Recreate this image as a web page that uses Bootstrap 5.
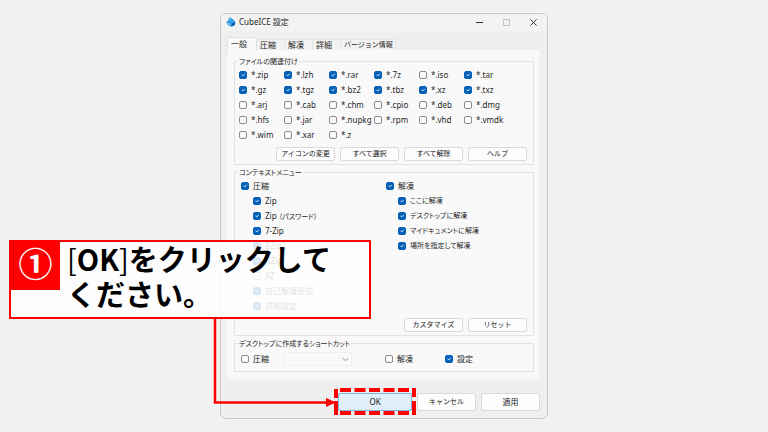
<!DOCTYPE html>
<html lang="ja">
<head>
<meta charset="utf-8">
<meta name="viewport" content="width=device-width, initial-scale=1">
<title>CubeICE 設定</title>
<link href="https://cdn.jsdelivr.net/npm/bootstrap@5.3.0/dist/css/bootstrap.min.css" rel="stylesheet">
<style>
  body { background: #f1f1f1; color: #262626; font-family: "Noto Sans", "Noto Sans CJK JP", sans-serif; font-size: 8px; line-height: 12px; font-feature-settings: "palt"; overflow: hidden; }
  .dialog-wrap { width: 100%; max-width: 328px; margin-bottom: 1px; }
  .dialog { background: #efefef; border: 1px solid #c9c9c9; border-radius: 6px; }
  .title-bar { background: #f3f3f3; border-radius: 5px 5px 0 0; height: 17px; padding: 0 6px 0 5px; gap: 3px; }
  .title-bar h1 { font-size: 8px; line-height: 16px; font-weight: 400; }
  .win-btn { width: 15px; height: 16px; }
  .win-btns { gap: 12px; }
  .sheet { padding: 6px 7px 0 6px; }
  .sheet .nav-tabs { border: 0; }
  .sheet .nav-link { padding: 0 8px 0 3px; height: 11px; line-height: 10px; font-size: 8px; color: #262626; background: #f2f2f2; border: 1px solid #e4e4e4; border-bottom: 0; border-left: 0; border-radius: 0; margin: 0; }
  .sheet .nav-link.active { height: 13px; padding: 0 9px 0 3px; border-left: 1px solid #e4e4e4; background: #f9f9f9; color: #262626; }
  .sheet .nav-link.kana { padding: 0 2px 0 3px; }
  .panel { background: #f9f9f9; border: 1px solid #f4f4f4; border-top: 0; padding: 6px 5px 7px 6px; }
  .group { border: 1px solid #e3e3e3; padding: 0 6px 3px 4px; }
  .group + .group { margin-top: 2px; }
  .group legend { float: none; width: auto; margin: 0 0 0 -1px; padding: 0 1px; font-size: 7px; line-height: 12px; }
  .kana, .sheet .kana { font-size: 7px; }
  .types { display: grid; grid-template-columns: repeat(6, 1fr); margin-right: 18px; }
  .opt { display: flex; align-items: center; gap: 4px; height: 15px; white-space: nowrap; }
  .opt .form-check-input { flex: none; width: 8px; height: 8px; margin: 0; border: 1px solid #8c8c8c; border-radius: 2px; background-color: #fbfbfb; }
  .opt .form-check-input:checked { background-color: #0560b8; border-color: #0560b8; }
  .indent { padding-left: 12px; }
  .menus { padding-left: 2px; }
  .col-pack { width: 145px; }
  .actions { gap: 5px; margin-top: 4px; }
  .push { width: 59px; height: 14px; padding: 0; font-size: 7px; line-height: 12px; color: #202020; background: #fdfdfd; border: 1px solid #dadada; border-radius: 2px; white-space: nowrap; }
  .shortcuts { padding: 2px 0 1px 2px; }
  .shortcuts .form-select { width: 69px; height: 14px; min-height: 0; padding: 0; font-size: 8px; border: 1px solid #ebebeb; border-radius: 0; background-color: #f9f9f9; background-size: 7px 7px; background-position: right 2px center; opacity: .6; }
  .short-pack { width: 42px; }
  .short-combo { width: 102px; }
  .short-open { width: 60px; }
  .footer-bar { gap: 5px; padding: 13px 7px 7px 0; }
  .footer-bar .push { height: 18px; line-height: 16px; }
  .footer-bar .push-wide { font-size: 8px; }
  .ok-wrap { position: relative; }
  .footer-bar .push-ok { width: 74px; display: block; background: #e0eef9; border-color: #7db5df; }
  .focus-dash { position: absolute; left: -4px; top: -5px; }
  .callout { position: absolute; left: -211px; top: 227px; width: 362px; min-height: 79px; background: rgba(255,255,255,.85); border: 2px solid #f00; color: #000; }
  .step { width: 49px; height: 48px; background: #f00; color: #fff; font: 700 34px/42px "Noto Sans CJK JP", sans-serif; text-align: center; font-feature-settings: normal; }
  .message { font: 700 29px/35px "Noto Sans CJK JP", sans-serif; padding: 0 0 0 7px; font-feature-settings: normal; white-space: nowrap; margin-top: -1px; }
  .thin { font-weight: 400; }
  .arrow { position: absolute; left: -8px; top: 305px; }
</style>
<script src="https://cdn.jsdelivr.net/npm/bootstrap@5.3.0/dist/js/bootstrap.bundle.min.js"></script>
</head>
<body>
<main class="d-flex justify-content-center align-items-center min-vh-100">
  <div class="dialog-wrap position-relative">
    <div class="dialog">
      <header class="title-bar d-flex align-items-center">
        <svg width="10" height="10" viewBox="0 0 20 20" aria-hidden="true"><path d="M6 1l6 2 3 3 4 4-1 6-6 3-5-1-5-4-1-4 4-3z" fill="#1f8fe0"/><path d="M6 1l6 2-2 5-5-2z" fill="#48b7f2"/><path d="M8 7l6 0 4 3-6 3-4-2z" fill="#3da4ea"/><path d="M12 13l6-3-1 6-6 3z" fill="#0a4fae"/><path d="M1 13l5-2 4 4-2 2z" fill="#8ac9ef"/></svg>
        <h1 class="mb-0 flex-grow-1">CubeICE 設定</h1>
        <div class="d-flex win-btns">
          <button class="btn p-0 border-0 win-btn d-flex align-items-center justify-content-center" type="button" aria-label="最小化"><svg width="7" height="7" viewBox="0 0 7 7"><path d="M0 3.5h7" stroke="#333"/></svg></button>
          <button class="btn p-0 border-0 win-btn d-flex align-items-center justify-content-center" type="button" aria-label="最大化" disabled><svg width="7" height="7" viewBox="0 0 7 7"><path d="M.5 .5h6v6h-6z" fill="none" stroke="#aaa"/></svg></button>
          <button class="btn p-0 border-0 win-btn d-flex align-items-center justify-content-center" type="button" aria-label="閉じる"><svg width="7" height="7" viewBox="0 0 7 7"><path d="M.4 .4l6.2 6.2M6.6 .4L.4 6.6" stroke="#333" fill="none"/></svg></button>
        </div>
      </header>
      <div class="sheet">
        <ul class="nav nav-tabs align-items-end">
          <li class="nav-item"><button class="nav-link active" type="button">一般</button></li>
          <li class="nav-item"><button class="nav-link" type="button">圧縮</button></li>
          <li class="nav-item"><button class="nav-link" type="button">解凍</button></li>
          <li class="nav-item"><button class="nav-link" type="button">詳細</button></li>
          <li class="nav-item"><button class="nav-link kana" type="button">バージョン情報</button></li>
        </ul>
        <div class="panel">
          <fieldset class="group">
            <legend>ファイルの関連付け</legend>
            <div class="types">
              <label class="opt"><input class="form-check-input" type="checkbox" checked>*.zip</label>
              <label class="opt"><input class="form-check-input" type="checkbox" checked>*.lzh</label>
              <label class="opt"><input class="form-check-input" type="checkbox" checked>*.rar</label>
              <label class="opt"><input class="form-check-input" type="checkbox" checked>*.7z</label>
              <label class="opt"><input class="form-check-input" type="checkbox">*.iso</label>
              <label class="opt"><input class="form-check-input" type="checkbox" checked>*.tar</label>
              <label class="opt"><input class="form-check-input" type="checkbox" checked>*.gz</label>
              <label class="opt"><input class="form-check-input" type="checkbox" checked>*.tgz</label>
              <label class="opt"><input class="form-check-input" type="checkbox" checked>*.bz2</label>
              <label class="opt"><input class="form-check-input" type="checkbox" checked>*.tbz</label>
              <label class="opt"><input class="form-check-input" type="checkbox" checked>*.xz</label>
              <label class="opt"><input class="form-check-input" type="checkbox" checked>*.txz</label>
              <label class="opt"><input class="form-check-input" type="checkbox">*.arj</label>
              <label class="opt"><input class="form-check-input" type="checkbox">*.cab</label>
              <label class="opt"><input class="form-check-input" type="checkbox">*.chm</label>
              <label class="opt"><input class="form-check-input" type="checkbox">*.cpio</label>
              <label class="opt"><input class="form-check-input" type="checkbox">*.deb</label>
              <label class="opt"><input class="form-check-input" type="checkbox">*.dmg</label>
              <label class="opt"><input class="form-check-input" type="checkbox">*.hfs</label>
              <label class="opt"><input class="form-check-input" type="checkbox">*.jar</label>
              <label class="opt"><input class="form-check-input" type="checkbox">*.nupkg</label>
              <label class="opt"><input class="form-check-input" type="checkbox">*.rpm</label>
              <label class="opt"><input class="form-check-input" type="checkbox">*.vhd</label>
              <label class="opt"><input class="form-check-input" type="checkbox">*.vmdk</label>
              <label class="opt"><input class="form-check-input" type="checkbox">*.wim</label>
              <label class="opt"><input class="form-check-input" type="checkbox">*.xar</label>
              <label class="opt"><input class="form-check-input" type="checkbox">*.z</label>
            </div>
            <div class="actions d-flex justify-content-end">
              <button class="btn push" type="button">アイコンの変更</button>
              <button class="btn push" type="button">すべて選択</button>
              <button class="btn push" type="button">すべて解除</button>
              <button class="btn push" type="button">ヘルプ</button>
            </div>
          </fieldset>
          <fieldset class="group">
            <legend>コンテキストメニュー</legend>
            <div class="menus d-flex">
              <div class="col-pack">
                <label class="opt"><input class="form-check-input" type="checkbox" checked>圧縮</label>
                <div class="indent">
                  <label class="opt"><input class="form-check-input" type="checkbox" checked>Zip</label>
                  <label class="opt"><input class="form-check-input" type="checkbox" checked><span>Zip <span class="kana">（パスワード）</span></span></label>
                  <label class="opt"><input class="form-check-input" type="checkbox" checked>7-Zip</label>
                  <label class="opt"><input class="form-check-input" type="checkbox" checked>BZip2</label>
                  <label class="opt"><input class="form-check-input" type="checkbox" checked>GZip</label>
                  <label class="opt"><input class="form-check-input" type="checkbox">XZ</label>
                  <label class="opt"><input class="form-check-input" type="checkbox" checked>自己解凍形式</label>
                  <label class="opt"><input class="form-check-input" type="checkbox" checked>詳細設定</label>
                </div>
              </div>
              <div>
                <label class="opt"><input class="form-check-input" type="checkbox" checked>解凍</label>
                <div class="indent kana">
                  <label class="opt"><input class="form-check-input" type="checkbox" checked>ここに解凍</label>
                  <label class="opt"><input class="form-check-input" type="checkbox" checked>デスクトップに解凍</label>
                  <label class="opt"><input class="form-check-input" type="checkbox" checked>マイドキュメントに解凍</label>
                  <label class="opt"><input class="form-check-input" type="checkbox" checked>場所を指定して解凍</label>
                </div>
              </div>
            </div>
            <div class="actions d-flex justify-content-end">
              <button class="btn push" type="button">カスタマイズ</button>
              <button class="btn push" type="button">リセット</button>
            </div>
          </fieldset>
          <fieldset class="group">
            <legend>デスクトップに作成するショートカット</legend>
            <div class="shortcuts d-flex align-items-center">
              <label class="opt short-pack"><input class="form-check-input" type="checkbox">圧縮</label>
              <div class="short-combo"><select class="form-select" aria-label="圧縮形式" disabled><option></option></select></div>
              <label class="opt short-open"><input class="form-check-input" type="checkbox">解凍</label>
              <label class="opt"><input class="form-check-input" type="checkbox" checked>設定</label>
            </div>
          </fieldset>
        </div>
      </div>
      <footer class="footer-bar d-flex justify-content-end">
        <div class="ok-wrap">
          <button class="btn push push-ok push-wide" type="button">OK</button>
          <svg class="focus-dash" width="82" height="27" viewBox="0 0 82 27" aria-hidden="true"><path d="M6 2H80M6 25H80" fill="none" stroke="#f00" stroke-width="4" stroke-dasharray="11 3.500"/><path d="M2 1V10M2 13V27M80 0V9M80 13V27" fill="none" stroke="#f00" stroke-width="4"/></svg>
        </div>
        <button class="btn push" type="button">キャンセル</button>
        <button class="btn push push-wide" type="button">適用</button>
      </footer>
    </div>
    <svg class="arrow" width="126" height="96" viewBox="0 0 126 96" aria-hidden="true"><path d="M3 0V84.500H116" fill="none" stroke="#f00" stroke-width="2.500"/><path d="M114 80L124 84.500L114 89z" fill="#f00"/></svg>
    <aside class="callout d-flex">
      <div class="step flex-shrink-0">①</div>
      <div class="message"><span class="thin">[</span>OK<span class="thin">]</span>をクリックして<br>ください。</div>
    </aside>
  </div>
</main>
</body>
</html>
